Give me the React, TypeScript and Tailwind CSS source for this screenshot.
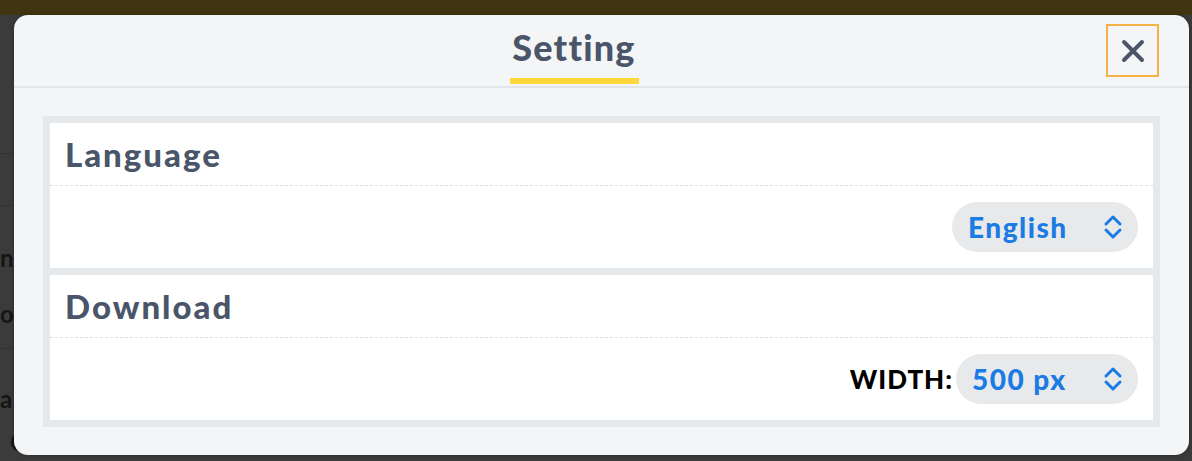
import { X } from 'lucide-react';

function UpDown() {
  return (
    <svg width="22" height="26" viewBox="0 0 22 26" fill="none" stroke="#1b7be4" strokeWidth="3" strokeLinecap="round" strokeLinejoin="round">
      <path d="M4 10 L11 3 L18 10" />
      <path d="M4 16 L11 23 L18 16" />
    </svg>
  );
}

function Pill({ value, width }: { value: string; width: string }) {
  return (
    <div className={`flex h-[50px] items-center justify-between rounded-full bg-[#e8e9ea] pl-[16px] pr-[14px] ${width}`}>
      <span className="text-[28px] font-black leading-none tracking-[1.5px] text-[#1b7be4]">{value}</span>
      <UpDown />
    </div>
  );
}

function Card({ title, children }: { title: string; children: React.ReactNode }) {
  return (
    <div className="flex h-[145px] flex-col bg-white">
      <div className="flex h-[63px] items-center border-b border-dashed border-[#dcdfe2] px-[15px]">
        <h2 className="text-[33px] font-black leading-none tracking-[2px] text-[#4a5569]">{title}</h2>
      </div>
      <div className="flex flex-1 items-center justify-end pr-[15px]">{children}</div>
    </div>
  );
}

export default function App() {
  return (
    <div className="relative h-[461px] w-[1192px] overflow-hidden bg-[#3b3b3b]" style={{ fontFamily: 'Lato, "Open Sans", sans-serif' }}>
      <div className="h-[15px] bg-[#3f3511]" />
      {/* page behind the overlay */}
      <div className="flex flex-col text-[24px] font-bold text-[#151515]">
        <div className="mt-[138px] border-t border-[#333]" />
        <div className="mt-[51px] border-t border-[#333]" />
        <div className="mt-[40px] leading-none">n</div>
        <div className="mt-[32px] leading-none">o</div>
        <div className="mt-[22px] border-t border-[#333]" />
        <div className="mt-[38px] leading-none">a</div>
        <div className="mt-[19px] flex items-center gap-[370px] leading-none">
          <span className="pl-[10px]">Clearing</span>
          <span className="text-[10px]">▼ ▼ ▼</span>
        </div>
      </div>

      <div className="absolute left-[14px] top-[15px] flex h-[440px] w-[1175px] flex-col rounded-[14px] bg-[#f3f5f6] shadow-[0_0_4px_rgba(0,0,0,0.3)]">
        <div className="relative flex h-[73px] flex-col items-center border-b-2 border-[#e3e6e8] pr-[55px]">
          <h1 className="pt-[14px] text-[36px] font-black leading-none tracking-[1.2px] text-[#4a5569]">Setting</h1>
          <div className="mt-[13px] h-[6px] w-[129px] bg-[#fdd73b]" />
          <button className="absolute right-[30px] top-[9px] flex h-[53px] w-[53px] items-center justify-center border-2 border-[#f5b347] text-[#4a5569]">
            <X size={36} strokeWidth={2.6} />
          </button>
        </div>

        <div className="px-[29px] pt-[28px]">
          <div className="flex flex-col gap-[7px] bg-[#e6e9eb] p-[7px]">
            <Card title="Language">
              <Pill value="English" width="w-[186px]" />
            </Card>
            <Card title="Download">
              <div className="flex items-center gap-[3px]">
                <span className="text-[26px] font-black leading-none tracking-[1px] text-black">WIDTH:</span>
                <Pill value="500 px" width="w-[182px]" />
              </div>
            </Card>
          </div>
        </div>
      </div>
    </div>
  );
}
